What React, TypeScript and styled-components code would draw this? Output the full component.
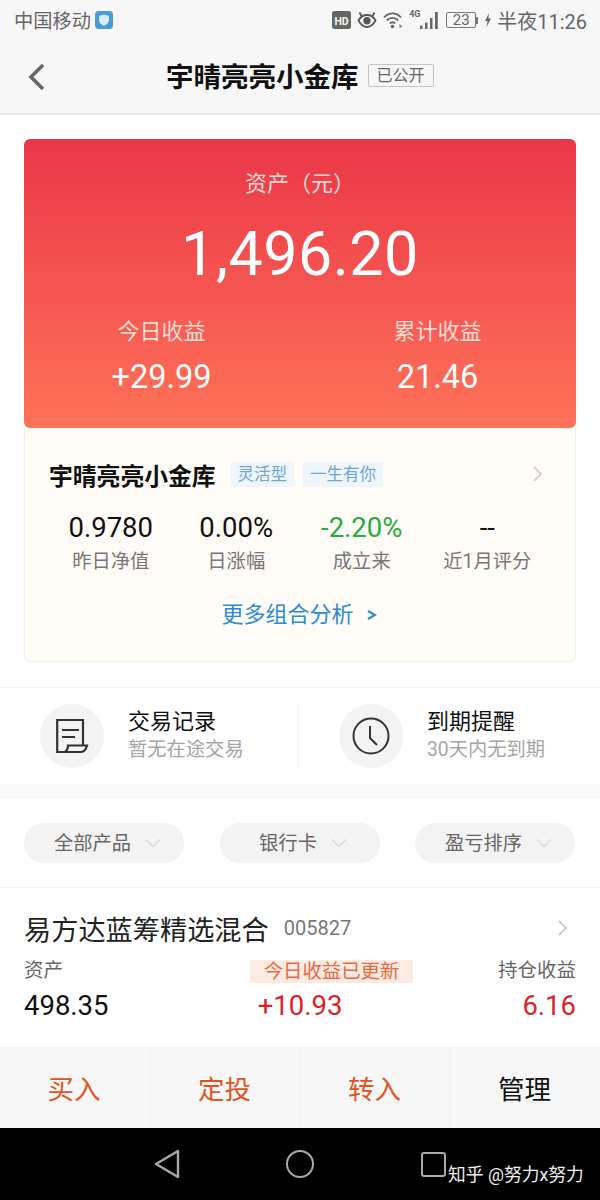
import styled, { createGlobalStyle } from "styled-components";

const FONT = `Roboto, "Noto Sans CJK SC", sans-serif`;

const GlobalStyle = createGlobalStyle`
  html, body {
    margin: 0;
    padding: 0;
    background: #fff;
    font-family: ${FONT};
  }
  * {
    box-sizing: border-box;
  }
`;

const metrics = [
  { value: "0.9780", label: "昨日净值" },
  { value: "0.00%", label: "日涨幅" },
  { value: "-2.20%", label: "成立来", green: true },
  { value: "--", label: "近1月评分" },
];

export default function App() {
  return (
    <Page>
      <GlobalStyle />
      <StatusBar>
        <Carrier>
          中国移动
          <svg width="18" height="18" viewBox="0 0 18 18">
            <rect width="18" height="18" rx="4" fill="#4a9ad8" />
            <path d="M9 3.500l5 1.600v3.600c0 3-2.200 5-5 6-2.800-1-5-3-5-6V5.100z" fill="#d9ecf9" />
          </svg>
        </Carrier>
        <StatusRight>
          <svg width="19" height="18" viewBox="0 0 19 18">
            <rect width="19" height="18" rx="2.500" fill="#666" />
            <text x="9.500" y="13.500" fontSize="10.500" fontWeight="700" textAnchor="middle" fill="#f6f6f6" fontFamily="Roboto">HD</text>
          </svg>
          <svg width="20" height="18" viewBox="0 0 20 18">
            <path d="M1.500 9.500C4 5 7 4 10 4s6 1 8.500 5.500C16 14 13 16 10 16S4 14 1.500 9.500z" fill="none" stroke="#555" strokeWidth="1.800" />
            <circle cx="10" cy="9.800" r="3.700" fill="#555" />
            <path d="M4.500 5L2.500 1.500M15.500 5l2-3.500" stroke="#555" strokeWidth="1.800" />
          </svg>
          <svg width="21" height="18" viewBox="0 0 21 18">
            <path d="M1 6.500c5-5.500 12-5.500 17 0M3.800 9.500c3.400-3.400 8-3.400 11.400 0M6.800 12.500c1.800-1.700 3.600-1.700 5.400 0" fill="none" stroke="#666" strokeWidth="1.800" />
            <circle cx="9.500" cy="15.500" r="1.800" fill="#666" />
            <path d="M16.500 13l3 2.300-3 2.300z" fill="#888" />
          </svg>
          <SignalWrap>
            <NetLabel>4G</NetLabel>
            <svg width="20" height="19" viewBox="0 0 20 19">
              <path d="M1 15.500h2.500V19H1zM6 12.500h2.500V19H6zM11 8h2.500v11H11zM16 2h2.800v17H16z" fill="#666" />
            </svg>
          </SignalWrap>
          <Battery>23</Battery>
          <BatteryTip />
          <svg width="8" height="16" viewBox="0 0 8 16">
            <path d="M5 1L1 9h2.500L2.500 15 7 6.500H4.300z" fill="#666" />
          </svg>
          <Clock>半夜11:26</Clock>
        </StatusRight>
      </StatusBar>

      <NavBar>
        <BackIcon width="20" height="30" viewBox="0 0 20 30">
          <path d="M16 3L4 15l12 12" fill="none" stroke="#666" strokeWidth="3.600" />
        </BackIcon>
        <NavTitle>宇晴亮亮小金库</NavTitle>
        <PublicTag>已公开</PublicTag>
      </NavBar>

      <Main>
        <AssetCard>
          <AssetLabel>资产（元）</AssetLabel>
          <AssetValue>1,496.20</AssetValue>
          <AssetRow>
            <AssetStat>
              <StatLabel>今日收益</StatLabel>
              <StatValue>+29.99</StatValue>
            </AssetStat>
            <AssetStat>
              <StatLabel>累计收益</StatLabel>
              <StatValue>21.46</StatValue>
            </AssetStat>
          </AssetRow>
        </AssetCard>

        <InfoCard>
          <InfoHead>
            <InfoTitle>宇晴亮亮小金库</InfoTitle>
            <BlueTag>灵活型</BlueTag>
            <BlueTag>一生有你</BlueTag>
            <InfoArrow width="12" height="18" viewBox="0 0 12 18">
              <path d="M2 2l7 7-7 7" fill="none" stroke="#cfcfcf" strokeWidth="1.800" />
            </InfoArrow>
          </InfoHead>
          <Metrics>
            {metrics.map((m) => (
              <Metric key={m.label}>
                <MetricValue $green={m.green}>{m.value}</MetricValue>
                <MetricLabel>{m.label}</MetricLabel>
              </Metric>
            ))}
          </Metrics>
          <MoreLink>
            更多组合分析
            <svg width="10" height="12" viewBox="0 0 10 12">
              <path d="M1 2l7 4-7 4" fill="none" stroke="#2a8bd6" strokeWidth="2.200" />
            </svg>
          </MoreLink>
        </InfoCard>
      </Main>

      <Shortcuts>
        <Shortcut>
          <RoundIcon>
            <svg width="34" height="36" viewBox="0 0 34 36">
              <path d="M28 27.500V2H2.200v32H26c3 0 5-2.500 6-6.500H13c0 3-1 5.500-3.500 6.500" fill="none" stroke="#333" strokeWidth="2.200" />
              <path d="M7 12h17M7 19h13" stroke="#333" strokeWidth="2.200" />
            </svg>
          </RoundIcon>
          <div>
            <ShortcutTitle>交易记录</ShortcutTitle>
            <ShortcutSub>暂无在途交易</ShortcutSub>
          </div>
        </Shortcut>
        <Shortcut>
          <RoundIcon>
            <svg width="38" height="38" viewBox="0 0 38 38">
              <circle cx="19" cy="19" r="17.500" fill="none" stroke="#333" strokeWidth="2" />
              <path d="M18 9v12l7 7" fill="none" stroke="#333" strokeWidth="2" />
            </svg>
          </RoundIcon>
          <div>
            <ShortcutTitle>到期提醒</ShortcutTitle>
            <ShortcutSub>30天内无到期</ShortcutSub>
          </div>
        </Shortcut>
      </Shortcuts>

      <Filters>
        {["全部产品", "银行卡", "盈亏排序"].map((f) => (
          <FilterPill key={f}>
            {f}
            <svg width="16" height="10" viewBox="0 0 16 10">
              <path d="M1 1.500l7 7 7-7" fill="none" stroke="#d6d6d6" strokeWidth="1.300" />
            </svg>
          </FilterPill>
        ))}
      </Filters>

      <Product>
        <ProductHead>
          <ProductName>易方达蓝筹精选混合</ProductName>
          <ProductCode>005827</ProductCode>
          <ProductArrow width="12" height="18" viewBox="0 0 12 18">
            <path d="M2 2l7 7-7 7" fill="none" stroke="#c8c8c8" strokeWidth="1.800" />
          </ProductArrow>
        </ProductHead>
        <ProductRow>
          <ProductCol>
            <ColLabel>资产</ColLabel>
            <ColValue>498.35</ColValue>
          </ProductCol>
          <ProductCol $align="center">
            <UpdatedTag>今日收益已更新</UpdatedTag>
            <ColValue $red>+10.93</ColValue>
          </ProductCol>
          <ProductCol $align="flex-end">
            <ColLabel>持仓收益</ColLabel>
            <ColValue $red>6.16</ColValue>
          </ProductCol>
        </ProductRow>
      </Product>

      <ActionBar>
        <Action $accent>买入</Action>
        <Action $accent>定投</Action>
        <Action $accent>转入</Action>
        <Action>管理</Action>
      </ActionBar>

      <SystemNav>
        <NavTriangle width="26" height="32" viewBox="0 0 26 32">
          <path d="M24 3L2 16l22 13z" fill="none" stroke="#aaa" strokeWidth="2.400" strokeLinejoin="round" />
        </NavTriangle>
        <NavCircle />
        <NavSquare />
        <Watermark>知乎 @努力x努力</Watermark>
      </SystemNav>
    </Page>
  );
}

const Page = styled.div`
  width: 600px;
  height: 1200px;
  overflow: hidden;
  background: #fff;
  display: flex;
  flex-direction: column;
`;

const StatusBar = styled.div`
  height: 40px;
  padding: 0 13px 0 14px;
  background: #f7f7f7;
  display: flex;
  align-items: center;
  justify-content: space-between;
  color: #666;
`;

const Carrier = styled.div`
  display: flex;
  align-items: center;
  gap: 4px;
  font-size: 19.300px;
`;

const StatusRight = styled.div`
  display: flex;
  align-items: center;
  gap: 6px;
`;

const SignalWrap = styled.div`
  position: relative;
  width: 30px;
  height: 20px;
  margin-left: -1px;
  display: flex;
  justify-content: flex-end;
`;

const NetLabel = styled.span`
  position: absolute;
  left: 0;
  top: -1px;
  font-size: 9px;
  font-weight: 700;
  color: #666;
`;

const Battery = styled.div`
  width: 30px;
  height: 16px;
  margin-left: 1px;
  margin-right: -6px;
  border: 1px solid #777;
  border-radius: 2px;
  font-size: 15px;
  line-height: 14px;
  text-align: center;
  color: #666;
`;

const BatteryTip = styled.div`
  width: 2px;
  height: 7px;
  background: #777;
`;

const Clock = styled.span`
  font-size: 20px;
  color: #666;
  margin-left: -1px;
`;

const NavBar = styled.div`
  position: relative;
  height: 75px;
  background: #f7f7f7;
  border-bottom: 2px solid #e6e6e6;
  display: flex;
  align-items: center;
  padding-left: 166px;
  padding-bottom: 3px;
`;

const BackIcon = styled.svg`
  position: absolute;
  left: 27px;
  top: 22px;
`;

const NavTitle = styled.div`
  font-size: 27.500px;
  font-weight: 700;
  color: #111;
`;

const PublicTag = styled.div`
  margin-left: 9px;
  width: 66px;
  height: 23px;
  border: 1px solid #c4c4c4;
  border-radius: 2px;
  font-size: 16px;
  line-height: 21px;
  text-align: center;
  color: #666;
`;

const Main = styled.div`
  padding: 24px 24px 25px;
`;

const AssetCard = styled.div`
  height: 289px;
  border-radius: 6px;
  background: linear-gradient(180deg, #ea3748 0%, #ff7258 100%);
  color: #fff;
  display: flex;
  flex-direction: column;
  align-items: center;
  padding-top: 31px;
`;

const AssetLabel = styled.div`
  font-size: 22px;
  line-height: 28px;
  color: #ffd9d6;
`;

const AssetValue = styled.div`
  margin-top: 20px;
  font-size: 61px;
  line-height: 72px;
  letter-spacing: 0.5px;
`;

const AssetRow = styled.div`
  margin-top: 27px;
  width: 100%;
  display: grid;
  grid-template-columns: 275px 1fr;
  text-align: center;
`;

const AssetStat = styled.div`
  display: flex;
  flex-direction: column;
  align-items: center;
`;

const StatLabel = styled.div`
  font-size: 22px;
  line-height: 30px;
  color: #ffdcd6;
`;

const StatValue = styled.div`
  margin-top: 11px;
  font-size: 32.500px;
  line-height: 38px;
`;

const InfoCard = styled.div`
  height: 234px;
  background: #fffbf6;
  border: 1px solid #f2eee6;
  border-top: none;
  border-radius: 0 0 6px 6px;
  padding: 0 24px;
`;

const InfoHead = styled.div`
  position: relative;
  display: flex;
  align-items: center;
  height: 92px;
`;

const InfoTitle = styled.div`
  font-size: 23.800px;
  font-weight: 700;
  color: #111;
  margin-right: 15px;
`;

const BlueTag = styled.div`
  height: 25px;
  padding: 0 7px;
  margin-right: 9px;
  margin-bottom: -1px;
  background: #eef6fc;
  border-radius: 2px;
  font-size: 16.500px;
  line-height: 25px;
  color: #6da7d4;
`;

const InfoArrow = styled.svg`
  position: absolute;
  right: 7px;
  top: 37px;
`;

const Metrics = styled.div`
  display: grid;
  grid-template-columns: repeat(4, 125.500px);
  margin-top: -8px;
  margin-left: -1px;
`;

const Metric = styled.div`
  display: flex;
  flex-direction: column;
  align-items: center;
  white-space: nowrap;
`;

const MetricValue = styled.div<{ $green?: boolean }>`
  font-size: 27.500px;
  line-height: 32px;
  color: ${(p) => (p.$green ? "#28ac3c" : "#111")};
`;

const MetricLabel = styled.div`
  margin-top: 4px;
  font-size: 19.300px;
  line-height: 28px;
  color: #777;
`;

const MoreLink = styled.div`
  margin-top: 24px;
  margin-left: -2px;
  display: flex;
  align-items: center;
  justify-content: center;
  gap: 13px;
  font-size: 22px;
  line-height: 30px;
  color: #2a8bd6;
`;

const Shortcuts = styled.div`
  height: 112px;
  border-top: 1px solid #f2f2f2;
  border-bottom: 15px solid #f8f8f8;
  display: grid;
  grid-template-columns: 298px 1fr;
  align-items: center;
`;

const Shortcut = styled.div`
  display: flex;
  align-items: center;
  padding-left: 40px;
  gap: 24px;
  height: 64px;

  & + & {
    border-left: 1px solid #f2f2f2;
  }
`;

const RoundIcon = styled.div`
  width: 64px;
  height: 64px;
  border-radius: 50%;
  background: #f3f3f3;
  display: flex;
  align-items: center;
  justify-content: center;
`;

const ShortcutTitle = styled.div`
  font-size: 22px;
  line-height: 28px;
  color: #111;
`;

const ShortcutSub = styled.div`
  font-size: 19.300px;
  line-height: 28px;
  color: #a5a5a5;
`;

const Filters = styled.div`
  height: 65px;
  padding: 0 25px 0 24px;
  border-bottom: 1px solid #f2f2f2;
  display: flex;
  justify-content: space-between;
  align-items: flex-start;
  margin-top: 24px;
`;

const FilterPill = styled.div`
  width: 160px;
  height: 40px;
  border-radius: 20px;
  background: #f3f3f3;
  display: flex;
  align-items: center;
  justify-content: center;
  gap: 14px;
  padding: 0 0 2px 7px;
  font-size: 19.300px;
  color: #666;

  svg {
    margin-top: 2px;
  }
`;

const Product = styled.div`
  padding: 0 24px;
`;

const ProductHead = styled.div`
  position: relative;
  height: 66px;
  display: flex;
  align-items: center;
  padding-top: 14px;
`;

const ProductName = styled.div`
  font-size: 27.200px;
  color: #222;
`;

const ProductCode = styled.div`
  margin-left: 15px;
  font-size: 20px;
  color: #777;
`;

const ProductArrow = styled.svg`
  position: absolute;
  right: 7px;
  top: 31px;
`;

const ProductRow = styled.div`
  display: grid;
  grid-template-columns: 1fr 162px 1fr;
  margin-top: 5px;
`;

const ProductCol = styled.div<{ $align?: string }>`
  display: flex;
  flex-direction: column;
  align-items: ${(p) => p.$align || "flex-start"};
`;

const ColLabel = styled.div`
  font-size: 19.500px;
  line-height: 24px;
  color: #666;
`;

const UpdatedTag = styled.div`
  align-self: flex-start;
  flex: none;
  width: 163px;
  height: 23px;
  margin: 1px 0 0 31px;
  background: #fdebe3;
  border-radius: 2px;
  font-size: 19.400px;
  line-height: 23px;
  text-align: center;
  color: #e56a3f;
  white-space: nowrap;
`;

const ColValue = styled.div<{ $red?: boolean }>`
  margin-top: 6px;
  font-size: 27.500px;
  line-height: 34px;
  color: ${(p) => (p.$red ? "#dd1f26" : "#111")};
`;

const ActionBar = styled.div`
  margin-top: 24px;
  height: 81px;
  background: #f7f7f7;
  display: grid;
  grid-template-columns: repeat(4, 1fr);
`;

const Action = styled.div<{ $accent?: boolean }>`
  display: flex;
  align-items: center;
  justify-content: center;
  padding-right: 2px;
  font-size: 26.500px;
  color: ${(p) => (p.$accent ? "#e2531f" : "#111")};

  & + & {
    border-left: 1px solid #f0f0f0;
  }
`;

const SystemNav = styled.div`
  position: relative;
  flex: 1;
  background: #000;
  display: flex;
  align-items: center;
  padding-left: 154px;
`;

const NavTriangle = styled.svg`
  margin-right: 106px;
`;

const NavCircle = styled.div`
  width: 28px;
  height: 28px;
  border: 2.5px solid #aaa;
  border-radius: 50%;
  margin-right: 107px;
`;

const NavSquare = styled.div`
  width: 25px;
  height: 25px;
  border: 2.5px solid #aaa;
  border-radius: 3px;
`;

const Watermark = styled.div`
  position: absolute;
  left: 448px;
  top: 35px;
  font-size: 17.800px;
  line-height: 24px;
  color: #eee;
`;
